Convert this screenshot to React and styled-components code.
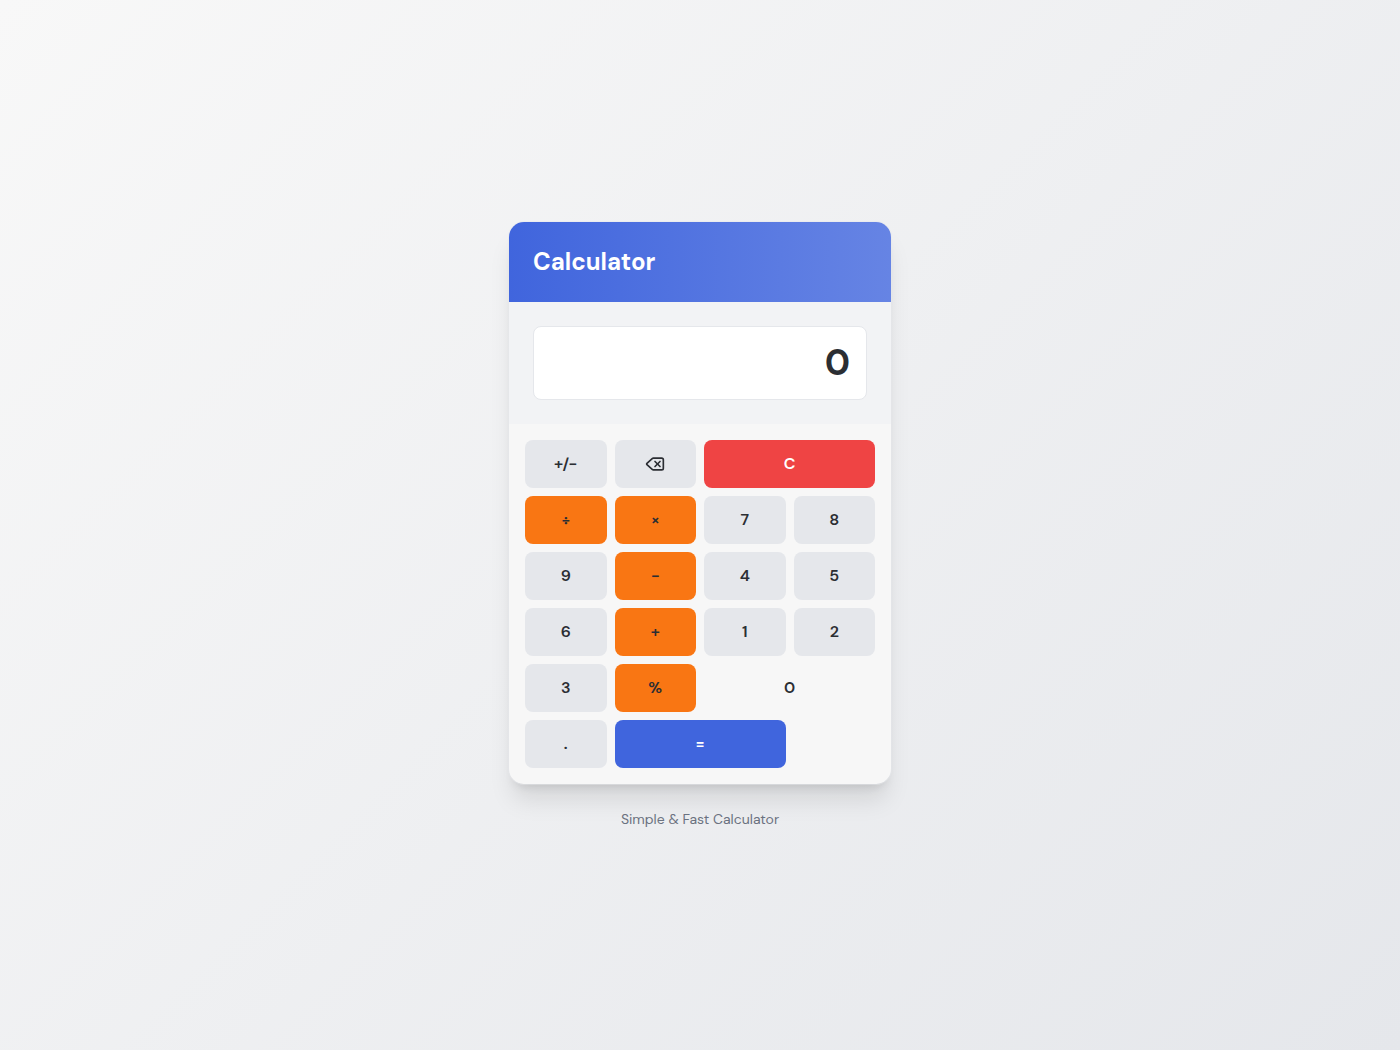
import React, { useState } from "react"
import styled, { createGlobalStyle } from "styled-components"
import { Delete } from "lucide-react"

const ink = "#2b2e33"
const blue = "#4065dd"
const red = "#ef4444"
const orange = "#f97613"
const grey = "#e5e7eb"
const white = "#ffffff"

const GlobalStyle = createGlobalStyle`
  * {
    box-sizing: border-box;
  }

  body {
    margin: 0;
    font-family: "DM Sans", Inter, "Liberation Sans", sans-serif;
    font-optical-sizing: none;
    -webkit-font-smoothing: antialiased;
    color: ${ink};
  }
`

const Page = styled.main`
  min-height: 100vh;
  display: flex;
  flex-direction: column;
  align-items: center;
  justify-content: center;
  background: linear-gradient(135deg, #f8f8f8 0%, #e5e7eb 100%);
`

const Card = styled.section`
  width: 100%;
  max-width: 384px;
  overflow: hidden;
  background: #f7f7f7;
  background-clip: padding-box;
  border: 1px solid rgba(229, 231, 235, 0.5);
  border-radius: 16px;
  box-shadow: 0 20px 25px -5px rgba(0, 0, 0, 0.1), 0 8px 10px -6px rgba(0, 0, 0, 0.1);
`

const Header = styled.header`
  padding: 24px;
  background: linear-gradient(90deg, ${blue}, #6684e4);
`

const Title = styled.h1`
  margin: 0;
  font-size: 24px;
  line-height: 32px;
  font-weight: 700;
  color: ${white};
`

const Screen = styled.div`
  padding: 24px;
  background: #f2f3f5;
`

const Display = styled.output`
  display: block;
  padding: 16px;
  overflow: hidden;
  background: ${white};
  border: 1px solid ${grey};
  border-radius: 8px;
  font-size: 36px;
  line-height: 40px;
  font-weight: 700;
  text-align: right;
`

const Keypad = styled.div`
  display: grid;
  grid-template-columns: repeat(4, 1fr);
  gap: 8px;
  padding: 16px;
`

const backgrounds = {
  plain: grey,
  operator: orange,
  clear: red,
  equals: blue,
  bare: "transparent",
}

const Key = styled.button`
  display: flex;
  align-items: center;
  justify-content: center;
  height: 48px;
  padding: 0;
  grid-column: span ${({ $span }) => $span || 1};
  background: ${({ $kind }) => backgrounds[$kind || "plain"]};
  color: ${({ $kind }) => ($kind === "clear" || $kind === "equals" ? white : ink)};
  border: 0;
  border-radius: 8px;
  font-family: inherit;
  font-size: 16px;
  line-height: 24px;
  font-weight: 600;
  cursor: pointer;
`

const Tagline = styled.p`
  margin: 24px 0 0;
  font-size: 14px;
  line-height: 20px;
  color: #6b7280;
`

const keys = [
  { label: "+/−" },
  { label: "⌫", icon: Delete, name: "Backspace" },
  { label: "C", kind: "clear", span: 2 },
  { label: "÷", kind: "operator" },
  { label: "×", kind: "operator" },
  { label: "7" },
  { label: "8" },
  { label: "9" },
  { label: "−", kind: "operator" },
  { label: "4" },
  { label: "5" },
  { label: "6" },
  { label: "+", kind: "operator" },
  { label: "1" },
  { label: "2" },
  { label: "3" },
  { label: "%", kind: "operator" },
  { label: "0", kind: "bare", span: 2 },
  { label: "." },
  { label: "=", kind: "equals", span: 2 },
]

const operations = {
  "+": (a, b) => a + b,
  "−": (a, b) => a - b,
  "×": (a, b) => a * b,
  "÷": (a, b) => a / b,
  "%": (a, b) => a % b,
}

const initial = { value: "0", stored: null, operator: null, fresh: true }

const compute = ({ value, stored, operator }) =>
  operator ? String(operations[operator](stored, Number(value))) : value

const press = (state, label) => {
  const { value, fresh } = state
  if (label === "C") return initial
  if (label === "+/−") return { ...state, value: String(-Number(value) || 0) }
  if (label === "⌫") return { ...state, value: value.slice(0, -1) || "0" }
  if (label === "=") return { ...initial, value: compute(state) }
  if (operations[label]) {
    const result = fresh ? value : compute(state)
    return { value: result, stored: Number(result), operator: label, fresh: true }
  }
  if (label === ".") {
    if (fresh) return { ...state, value: "0.", fresh: false }
    return value.includes(".") ? state : { ...state, value: value + "." }
  }
  return { ...state, value: fresh || value === "0" ? label : value + label, fresh: false }
}

const App = () => {
  const [state, setState] = useState(initial)

  return (
    <Page>
      <GlobalStyle />
      <Card>
        <Header>
          <Title>Calculator</Title>
        </Header>
        <Screen>
          <Display>{state.value}</Display>
        </Screen>
        <Keypad>
          {keys.map(({ label, icon: Icon, name, kind, span }) => (
            <Key
              key={label}
              type="button"
              aria-label={name}
              $kind={kind}
              $span={span}
              onClick={() => setState(current => press(current, label))}
            >
              {Icon ? <Icon size={20} /> : label}
            </Key>
          ))}
        </Keypad>
      </Card>
      <Tagline>Simple &amp; Fast Calculator</Tagline>
    </Page>
  )
}

export default App
